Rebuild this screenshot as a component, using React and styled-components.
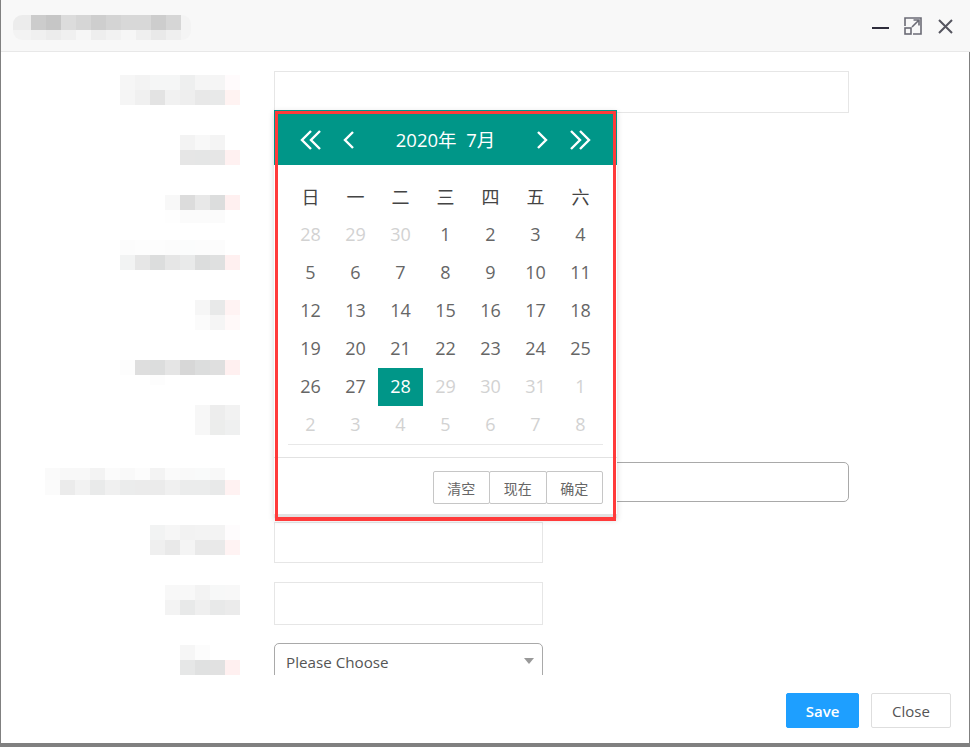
import React from 'react';
import styled, { createGlobalStyle, css } from 'styled-components';

const FONT = '"Open Sans", "Noto Sans CJK SC", sans-serif';
const TEAL = '#009688';

const GlobalStyle = createGlobalStyle`
  html, body {
    margin: 0;
    padding: 0;
    overflow: hidden;
    background: #808080;
  }
  * { box-sizing: border-box; }
`;

const Shell = styled.div`
  width: 970px;
  height: 747px;
  padding: 0 1px 4px 1px;
  background: #808080;
  font-family: ${FONT};
`;

const Dialog = styled.div`
  position: relative;
  width: 968px;
  height: 743px;
  display: flex;
  flex-direction: column;
  background: #fff;
`;

const Header = styled.header`
  flex: none;
  height: 52px;
  margin-right: -1px;
  padding: 15px 15px 0 12px;
  display: flex;
  justify-content: space-between;
  background: #f8f8f8;
  border-bottom: 1px solid #e8e8e8;
`;

const WindowTools = styled.div`
  display: flex;
  align-items: flex-start;
  gap: 13px;
  margin-top: 2px;
`;

const ToolIcon = styled.svg`
  display: block;
  width: ${(p) => p.$size}px;
  height: ${(p) => p.$size}px;
  fill: none;
`;

const Mosaic = styled.div`
  display: grid;
  grid-template-columns: ${(p) => p.$columns};
  grid-template-rows: ${(p) => p.$rows};
  ${(p) =>
    p.$title &&
    css`
      & > :nth-child(1) { border-top-left-radius: 9px; }
      & > :nth-child(13) { border-bottom-left-radius: 9px; }
      & > :nth-child(12) { border-top-right-radius: 9px; }
      & > :nth-child(24) { border-bottom-right-radius: 9px; }
    `}
`;

const Cell = styled.span`
  display: block;
  background: ${(p) => p.$c || 'transparent'};
`;

const Body = styled.main`
  flex: none;
  height: 623px;
  padding-top: 19px;
  overflow: hidden;
`;

const Row = styled.div`
  height: ${(p) => p.$h}px;
  display: grid;
  grid-template-columns: 239px 1fr;
  column-gap: 34px;
  align-items: start;
`;

const LabelCell = styled.div`
  padding-top: ${(p) => p.$offset}px;
  display: flex;
  justify-content: flex-end;
`;

const Input = styled.div`
  width: ${(p) => (p.$wide ? 575 : 269)}px;
  height: ${(p) => p.$height}px;
  border: 1px solid ${(p) => (p.$strong ? '#a9a9a9' : '#e6e6e6')};
  border-radius: ${(p) => (p.$strong ? 5 : 0)}px;
  background: #fff;
`;

const Select = styled.div`
  position: relative;
  width: 269px;
  height: 40px;
  padding: 7px 11px;
  border: 1px solid #a9a9a9;
  border-radius: 5px;
  color: #555;
  font-size: 15.2px;
  line-height: 22px;
`;

const Caret = styled.i`
  position: absolute;
  top: 14px;
  right: 8px;
  width: 0;
  height: 0;
  border-left: 5px solid transparent;
  border-right: 5px solid transparent;
  border-top: 6px solid #999;
`;

const Footer = styled.footer`
  flex: 1;
  padding: 18px 18px 0 0;
  display: flex;
  justify-content: flex-end;
  align-items: flex-start;
  gap: 12px;
  background: #fff;
`;

const FooterButton = styled.button`
  width: ${(p) => p.$w}px;
  height: 35px;
  padding: 0;
  border: 1px solid ${(p) => (p.$primary ? '#1e9fff' : '#dedede')};
  border-radius: 2px;
  background: ${(p) => (p.$primary ? '#1e9fff' : '#fff')};
  color: ${(p) => (p.$primary ? '#fff' : '#555')};
  font-family: ${FONT};
  font-size: 15px;
  font-weight: ${(p) => (p.$primary ? 600 : 400)};
`;

const Picker = styled.div`
  position: absolute;
  left: 273px;
  top: 110px;
  width: 343px;
  height: 408px;
  background: #fff;
  border-bottom: 4px solid #e2e2e2;
  box-shadow: 0 2px 6px rgba(0, 0, 0, 0.16);
`;

const PickerHead = styled.div`
  height: 55px;
  padding: 5px 26px 0 26px;
  display: flex;
  align-items: center;
  justify-content: space-between;
  background: ${TEAL};
  color: #fff;
`;

const NavGroup = styled.div`
  display: flex;
  align-items: center;
  gap: ${(p) => p.$gap}px;
`;

const NavIcon = styled.svg`
  display: block;
  width: ${(p) => p.$w}px;
  height: 22px;
  fill: none;
  stroke: #fff;
  stroke-width: 2.4;
`;

const MonthTitle = styled.div`
  font-size: 18.5px;
  line-height: 24px;
  white-space: pre;
`;

const Grid = styled.div`
  width: 315px;
  margin: 13px 0 0 14px;
  display: grid;
  grid-template-columns: repeat(7, 45px);
  grid-auto-rows: 38px;
  border-bottom: 1px solid #e8e8e8;
`;

const Day = styled.div`
  display: flex;
  align-items: center;
  justify-content: center;
  padding-bottom: 2px;
  font-size: 18px;
  color: ${(p) => (p.$selected ? '#fff' : p.$muted ? '#d2d2d2' : p.$head ? '#444' : '#666')};
  background: ${(p) => (p.$selected ? TEAL : 'transparent')};
`;

const PickerFoot = styled.div`
  margin-top: 12px;
  padding: 13px 14px 0 0;
  display: flex;
  justify-content: flex-end;
  border-top: 1px solid #e2e2e2;
`;

const FootButton = styled.button`
  width: 57.5px;
  height: 33px;
  margin-left: -1px;
  padding: 0;
  border: 1px solid #c6c6c6;
  border-radius: 2px;
  background: #fff;
  color: #666;
  font-family: ${FONT};
  font-size: 14px;
`;

const Highlight = styled.div`
  position: absolute;
  left: 274px;
  top: 111px;
  width: 341px;
  height: 410px;
  border: 3px solid #ff3a3a;
  border-bottom-width: 4px;
  pointer-events: none;
`;

const title = {
  columns: '18px repeat(10, 15px) 10px',
  rows: '15px 10px',
  cells: [
    '#ececec', '#ccc', '#c6c6c6', '#dcdcdc', '#d6d6d6', '#cecece', '#d4d4d4', '#d8d8d8', '#d8d8d8', '#cdcdcd', '#d6d6d6', '#f4f4f4',
    '#f3f3f3', '#f0f0f0', '#ececec', '#f0f0f0', '#f6f6f6', '#eee', '#f2f2f2', '#f6f6f6', '#efefef', '#e9e9e9', '#efefef', '#f4f4f4',
  ],
};

// blurred field labels, two rows of 15px blocks
const rows = [
  { h: 60, offset: 4, rowsCss: '15px 15px', cells: [
    ['#f6f6f6', '#f3f3f3', '#f5f6f6', '#f5f6f6', '#eeefef', '#f5f5f5', '#f5f5f5', '#fffbfc'],
    ['#f5f5f5', '#f0f0f0', '#e3e3e3', '#f1f1f1', '#eee', '#e8e8e8', '#e8e9e9', '#fff3f2'],
  ], field: { wide: true, height: 42 } },
  { h: 60, offset: 4, rowsCss: '15px 15px', cells: [
    ['#f3f3f3', '#f8f8f8', '#f4f4f4', null],
    ['#e6e6e6', '#e5e6e6', '#e6e6e6', '#fff1f1'],
  ], field: { height: 42 } },
  { h: 45, offset: 4, rowsCss: '15px 13px', cells: [
    ['#f8f8f8', '#dcdcdc', '#e8e8e8', '#dcdddd', '#fff0f0'],
    ['#fefefe', '#fbfbfb', '#fbfbfb', '#fbfbfb', null],
  ], field: { height: 42 } },
  { h: 60, offset: 4, rowsCss: '15px 15px', cells: [
    ['#fcfcfc', '#fdfdfd', '#fdfdfd', '#fcfcfc', '#fbfcfc', '#fcfcfc', '#fcfcfc', null],
    ['#f2f3f3', '#e6e6e6', '#dcdddd', '#e6e6e6', '#e9eaea', '#dcdddd', '#dfe0e0', '#fff0f0'],
  ], field: { height: 42 } },
  { h: 60, offset: 4, rowsCss: '15px 15px', cells: [
    ['#f6f6f6', '#e8e9e9', '#fff3f3'],
    ['#fbfbfb', '#f5f5f5', '#fff9f9'],
  ], field: { height: 42 } },
  { h: 45, offset: 4, rowsCss: '15px 10px', cells: [
    ['#fdfdfd', '#dedede', '#dcdddd', '#e5e5e5', '#d7d7d7', '#dcdddd', '#dfdfdf', '#fff0f0'],
    [null, null, '#fdfdfd', null, null, null, null, null],
  ], field: { height: 42 } },
  { h: 61, offset: 4, rowsCss: '15px 15px', cells: [
    ['#f7f7f7', '#ededed', '#f2f2f2'],
    ['#f7f7f7', '#ecedec', '#eff0f0'],
  ], field: { height: 42 } },
  { h: 60, offset: 6, rowsCss: '12px 15px', cells: [
    ['#fafafa', '#f8f8f8', '#f8f8f8', '#f3f3f3', '#fbfbfb', '#f9f9f9', '#fcfcfc', '#f3f3f3', '#fafafa', '#f9f9f9', '#f9fafa', '#f8f8f8', null],
    ['#fbfbfb', '#ebebeb', '#f2f2f2', '#e9eaea', '#f0f0f0', '#ebecec', '#ebebeb', '#ebebeb', '#f0f0f0', '#ebecec', '#ebecec', '#e8e9e9', '#fff2f2'],
  ], field: { wide: true, height: 40, strong: true } },
  { h: 60, offset: 3, rowsCss: '15px 15px', cells: [
    ['#f2f3f3', '#f6f6f6', '#f2f2f2', '#f3f3f3', '#f3f3f3', '#fefcfd'],
    ['#efefef', '#e9e9e9', '#f4f4f4', '#e9e9e9', '#e9e9e9', '#fff3f3'],
  ], field: { height: 41 } },
  { h: 61, offset: 3, rowsCss: '15px 15px', cells: [
    ['#f8f8f8', '#f8f8f8', '#f3f3f3', '#f7f8f8', '#f8f8f8'],
    ['#f3f3f3', '#e8e9e9', '#efefef', '#e8e9e9', '#ebebeb'],
  ], field: { height: 43 } },
  { h: 60, offset: 2, rowsCss: '15px 15px', cells: [
    ['#f6f6f6', '#fcfcfc', null, null],
    ['#e6e7e7', '#e0e1e1', '#e1e1e1', '#fff0f0'],
  ], select: true },
];

const weekDays = ['日', '一', '二', '三', '四', '五', '六'];

const days = [
  [28, 1], [29, 1], [30, 1], [1], [2], [3], [4],
  [5], [6], [7], [8], [9], [10], [11],
  [12], [13], [14], [15], [16], [17], [18],
  [19], [20], [21], [22], [23], [24], [25],
  [26], [27], [28, 0, 1], [29, 1], [30, 1], [31, 1], [1, 1],
  [2, 1], [3, 1], [4, 1], [5, 1], [6, 1], [7, 1], [8, 1],
];

const Blocks = ({ columns, rowsCss, cells, isTitle }) => (
  <Mosaic $columns={columns} $rows={rowsCss} $title={isTitle}>
    {cells.map((c, i) => (
      <Cell key={i} $c={c} />
    ))}
  </Mosaic>
);

const App = () => (
  <Shell>
    <GlobalStyle />
    <Dialog>
      <Header>
        <Blocks columns={title.columns} rowsCss={title.rows} cells={title.cells} isTitle />
        <WindowTools>
          <ToolIcon $size={20} viewBox="0 0 20 20">
            <path d="M1 11h17" stroke="#2e2d3c" strokeWidth="2" />
          </ToolIcon>
          <ToolIcon $size={20} viewBox="0 0 20 20" stroke="#6b6b75" strokeWidth="1.6">
            <path d="M1 9V1h16v16H9" />
            <rect x="1" y="11" width="6" height="6" />
            <path d="M8 10l7-7M9.5 3H15v5.5" />
          </ToolIcon>
          <ToolIcon $size={18} viewBox="0 0 18 18" stroke="#55555f" strokeWidth="2">
            <path d="M2 3l13 13M15 3L2 16" />
          </ToolIcon>
        </WindowTools>
      </Header>

      <Body>
        {rows.map((row, i) => (
          <Row key={i} $h={row.h}>
            <LabelCell $offset={row.offset}>
              <Blocks
                columns={`repeat(${row.cells[0].length}, 15px)`}
                rowsCss={row.rowsCss}
                cells={row.cells.flat()}
              />
            </LabelCell>
            {row.select ? (
              <Select>
                Please Choose
                <Caret />
              </Select>
            ) : (
              <Input $wide={row.field.wide} $height={row.field.height} $strong={row.field.strong} />
            )}
          </Row>
        ))}
      </Body>

      <Footer>
        <FooterButton $primary $w={73}>Save</FooterButton>
        <FooterButton $w={80}>Close</FooterButton>
      </Footer>

      <Picker>
        <PickerHead>
          <NavGroup $gap={21}>
            <NavIcon $w={22} viewBox="0 0 22 22">
              <path d="M11 2L2 11l9 9M20 2l-9 9 9 9" />
            </NavIcon>
            <NavIcon $w={11} viewBox="0 0 11 22">
              <path d="M10 3L2 11l8 8" />
            </NavIcon>
          </NavGroup>
          <MonthTitle>2020年  7月</MonthTitle>
          <NavGroup $gap={21}>
            <NavIcon $w={11} viewBox="0 0 11 22">
              <path d="M1 3l8 8-8 8" />
            </NavIcon>
            <NavIcon $w={22} viewBox="0 0 22 22">
              <path d="M2 2l9 9-9 9M11 2l9 9-9 9" />
            </NavIcon>
          </NavGroup>
        </PickerHead>
        <Grid>
          {weekDays.map((d) => (
            <Day key={d} $head>{d}</Day>
          ))}
          {days.map(([n, muted, selected], i) => (
            <Day key={i} $muted={muted} $selected={selected}>{n}</Day>
          ))}
        </Grid>
        <PickerFoot>
          <FootButton>清空</FootButton>
          <FootButton>现在</FootButton>
          <FootButton>确定</FootButton>
        </PickerFoot>
      </Picker>
      <Highlight />
    </Dialog>
  </Shell>
);

export default App;
